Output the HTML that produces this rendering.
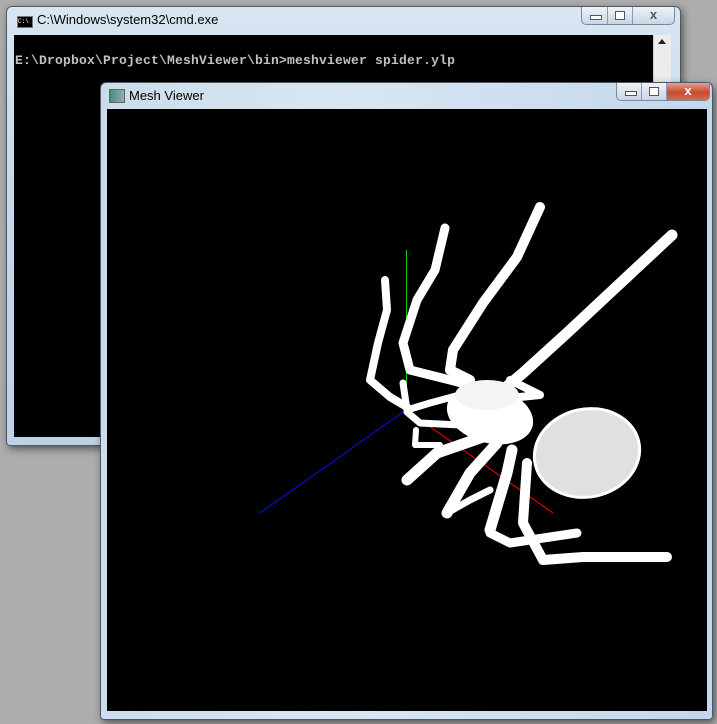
<!DOCTYPE html>
<html><head><style>
body{margin:0;width:717px;height:724px;background:#adadad;position:relative;overflow:hidden;font-family:"Liberation Sans",sans-serif}
.win{position:absolute;border-radius:6px 6px 4px 4px;border:1px solid #4a5a6a;box-shadow:2px 3px 8px rgba(0,0,0,.5);background:linear-gradient(#d9e6f2,#c6d8ea 40%,#bdd2e6)}
.title{position:absolute;font-size:13px;color:#000}
.cli{position:absolute;background:#000}
.btns{position:absolute;height:17px;border:1px solid #7a8a9c;border-top:none;border-radius:0 0 5px 5px;display:flex;overflow:hidden;background:linear-gradient(#eef3f8,#c8d6e4)}
.btns div{border-left:1px solid #8a9aac;position:relative}
.btns div:first-child{border-left:none}
</style></head><body>
<div class="win" style="left:6px;top:6px;width:673px;height:438px">
  <div style="position:absolute;left:10px;top:9px;width:14px;height:10px;background:#000;border:1px solid #777;color:#fff;font-size:6px;line-height:10px;font-family:'Liberation Mono',monospace">C:\</div>
  <div class="title" style="left:30px;top:5px">C:\Windows\system32\cmd.exe</div>
  <div class="btns" style="left:574px;top:0;width:92px">
    <div style="width:26px"><span style="position:absolute;left:8px;top:8px;width:10px;height:3px;border:1px solid #555;background:#fff"></span></div>
    <div style="width:24px"><span style="position:absolute;left:7px;top:4px;width:8px;height:7px;border:1px solid #555;background:#fff"></span></div>
    <div style="width:42px;text-align:center;font-size:13px;font-weight:bold;color:#555;line-height:16px">x</div>
  </div>
  <div class="cli" style="left:7px;top:28px;width:657px;height:402px">
    <div style="position:absolute;left:1px;top:18px;color:#c0c0c0;font:bold 13px 'Liberation Mono',monospace;letter-spacing:0.2px;white-space:nowrap">E:\Dropbox\Project\MeshViewer\bin&gt;meshviewer spider.ylp</div>
    <div style="position:absolute;right:0;top:0;width:17px;height:402px;background:#ececec;border-left:1px solid #ccc">
      <div style="position:absolute;top:4px;left:4px;width:0;height:0;border:4px solid transparent;border-bottom:5px solid #222;border-top:none"></div>
    </div>
  </div>
</div>
<div class="win" style="left:100px;top:82px;width:611px;height:636px;background:linear-gradient(90deg,#cddcec,#d9e6f2 40%,#c4d7ea)">
  <div style="position:absolute;left:8px;top:6px;width:14px;height:12px;background:linear-gradient(90deg,#4a8a6a,#8ab0c8);border:1px solid #666"></div>
  <div class="title" style="left:28px;top:5px">Mesh Viewer</div>
  <div class="btns" style="left:515px;top:0;width:92px">
    <div style="width:25px"><span style="position:absolute;left:8px;top:8px;width:10px;height:3px;border:1px solid #555;background:#fff"></span></div>
    <div style="width:24px"><span style="position:absolute;left:7px;top:4px;width:8px;height:7px;border:1px solid #555;background:#fff"></span></div>
    <div style="width:43px;background:linear-gradient(#e8a090,#c84a30 55%,#d86a50);text-align:center;font-size:13px;font-weight:bold;color:#fff;line-height:16px">x</div>
  </div>
  <div class="cli" style="left:6px;top:26px;width:600px;height:602px">
    <svg width="600" height="602" viewBox="107 109 600 602" style="position:absolute;left:0;top:0">
      <line x1="406.5" y1="250" x2="406.5" y2="410" stroke="#00d000" stroke-width="1"/>
      <line x1="406" y1="410" x2="260" y2="513" stroke="#0010ff" stroke-width="1"/>
      <line x1="406" y1="410" x2="553" y2="513" stroke="#ff0000" stroke-width="1"/>
      <g fill="none" stroke="#fff" stroke-linecap="round" stroke-linejoin="round">
        <polyline stroke-width="8" points="385,280 387,310 378,343 370,380 390,397 407,407"/>
        <polyline stroke-width="9" points="445,228 435,270 417,300 403,343 410,370 450,380 477,387"/>
        <polyline stroke-width="10" points="540,207 517,257 483,303 453,350 450,370 470,380"/>
        <polyline stroke-width="11" points="672,235 613,290 567,333 523,373 505,388"/>
        <polyline stroke-width="7" points="403,383 407,410 430,403 467,393"/>
        <polyline stroke-width="7" points="407,412 420,423 460,425 480,420"/>
        <polyline stroke-width="6" points="416,430 415,445 440,445"/>
        <polyline stroke-width="11" points="407,480 437,453 483,437"/>
        <polyline stroke-width="11" points="447,513 470,473 497,443"/>
        <polyline stroke-width="7" points="447,513 470,500 490,490"/>
        <polyline stroke-width="11" points="490,530 507,473 512,450"/>
        <polyline stroke-width="9" points="490,533 510,543 550,537 577,533"/>
        <polyline stroke-width="10" points="527,463 523,523 543,560 583,557 667,557"/>
        <polyline stroke-width="8" points="490,400 540,395 510,380"/>
      </g>
      <ellipse cx="490" cy="415" rx="44" ry="28" fill="#fff" transform="rotate(15 490 415)"/>
      <ellipse cx="487" cy="395" rx="32" ry="15" fill="#f4f4f4"/>
      <ellipse cx="587" cy="453" rx="53" ry="44" fill="#e0e0e0" stroke="#fff" stroke-width="3" transform="rotate(-12 587 453)"/>
    </svg>
  </div>
</div>
</body></html>
